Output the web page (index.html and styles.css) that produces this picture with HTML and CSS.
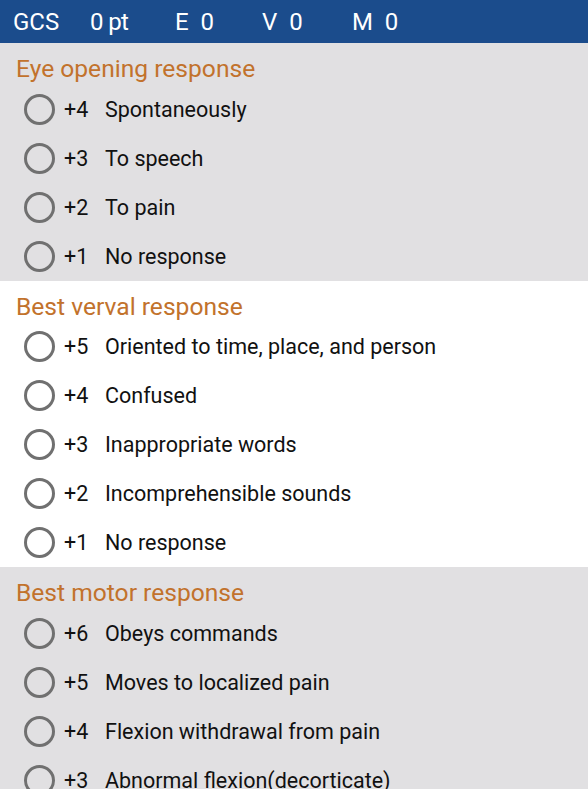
FILE: index.html
```html
<!DOCTYPE html>
<html>
<head>
<meta charset="utf-8">
<link rel="stylesheet" href="styles.css">
</head>
<body>
<div class="header">
  <span class="h-gcs">GCS</span>
  <span class="h-pt">0 pt</span>
  <span class="h-e">E&nbsp;&nbsp;0</span>
  <span class="h-v">V&nbsp;&nbsp;0</span>
  <span class="h-m">M&nbsp;&nbsp;0</span>
</div>

<div class="section gray">
  <div class="title">Eye opening response</div>
  <div class="row"><span class="radio"></span><span class="score">+4</span><span class="label">Spontaneously</span></div>
  <div class="row"><span class="radio"></span><span class="score">+3</span><span class="label">To speech</span></div>
  <div class="row"><span class="radio"></span><span class="score">+2</span><span class="label">To pain</span></div>
  <div class="row"><span class="radio"></span><span class="score">+1</span><span class="label">No response</span></div>
</div>

<div class="section white">
  <div class="title">Best verval response</div>
  <div class="row"><span class="radio"></span><span class="score">+5</span><span class="label">Oriented to time, place, and person</span></div>
  <div class="row"><span class="radio"></span><span class="score">+4</span><span class="label">Confused</span></div>
  <div class="row"><span class="radio"></span><span class="score">+3</span><span class="label">Inappropriate words</span></div>
  <div class="row"><span class="radio"></span><span class="score">+2</span><span class="label">Incomprehensible sounds</span></div>
  <div class="row"><span class="radio"></span><span class="score">+1</span><span class="label">No response</span></div>
</div>

<div class="section gray">
  <div class="title">Best motor response</div>
  <div class="row"><span class="radio"></span><span class="score">+6</span><span class="label">Obeys commands</span></div>
  <div class="row"><span class="radio"></span><span class="score">+5</span><span class="label">Moves to localized pain</span></div>
  <div class="row"><span class="radio"></span><span class="score">+4</span><span class="label">Flexion withdrawal from pain</span></div>
  <div class="row"><span class="radio"></span><span class="score">+3</span><span class="label">Abnormal flexion(decorticate)</span></div>
</div>
</body>
</html>
```

FILE: styles.css
```css
html, body {
  margin: 0;
  padding: 0;
}
body {
  font-family: Roboto, "Liberation Sans", sans-serif;
  background: #e1e0e2;
  width: 588px;
  height: 789px;
  overflow: hidden;
}
.header {
  height: 43px;
  background: #1b4c8c;
  color: #ffffff;
  font-size: 24px;
  display: flex;
  align-items: center;
}
.header span {
  display: block;
  white-space: nowrap;
}
.h-gcs { margin-left: 13px; width: 77px; }
.h-pt { width: 85px; letter-spacing: -0.6px; }
.h-e { width: 87px; }
.h-v { width: 90px; }
.section {
  display: flex;
  flex-direction: column;
}
.gray { background: #e1e0e2; }
.white { background: #ffffff; }
.title {
  height: 41.5px;
  padding-left: 16px;
  padding-top: 11px;
  box-sizing: border-box;
  font-size: 24.6px;
  line-height: 1.2;
  color: #c2722c;
  white-space: nowrap;
}
.row {
  height: 49px;
  display: flex;
  align-items: center;
  font-size: 21.5px;
  color: #111111;
}
.radio {
  width: 25px;
  height: 25px;
  border: 3px solid #707070;
  border-radius: 50%;
  margin-left: 24px;
  flex: none;
}
.score {
  margin-left: 9px;
  width: 41px;
}
.label {
  white-space: nowrap;
}
```
